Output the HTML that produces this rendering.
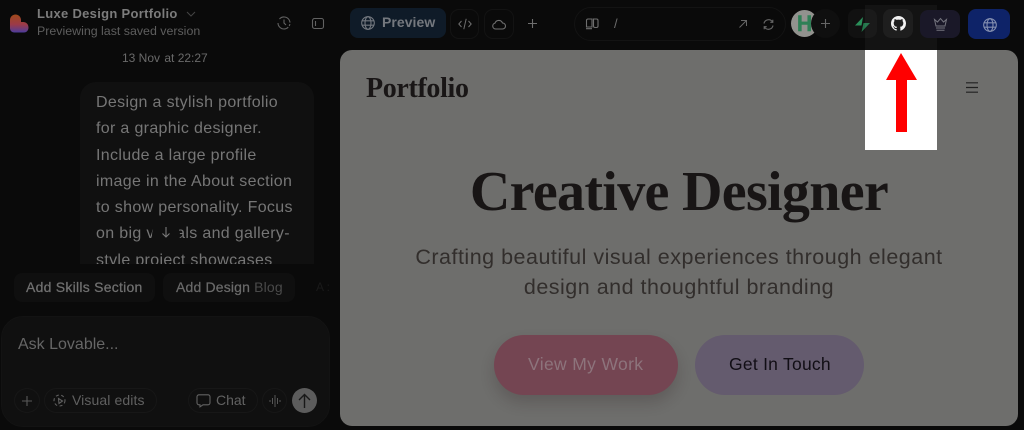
<!DOCTYPE html>
<html><head><meta charset="utf-8">
<style>
html,body{margin:0;padding:0;width:1024px;height:430px;overflow:hidden;background:#0a0a0a}
body{position:relative;font-family:"Liberation Sans",sans-serif}
.t{position:absolute;white-space:nowrap;line-height:1}
.b{position:absolute;box-sizing:border-box}
svg{position:absolute;overflow:visible}
</style></head><body>

<!-- left header -->
<svg style="left:9px;top:14px" width="20" height="20" viewBox="0 0 20 20"><defs><linearGradient id="h" x1="0" y1="0" x2="0" y2="1"><stop offset="0" stop-color="#a04a1a"/><stop offset=".55" stop-color="#9c3a48"/><stop offset="1" stop-color="#4c3c9c"/></linearGradient></defs><path d="M6.500.5C3.300.5 1 3 1 6v8c0 2.700 1.800 4.500 4.300 4.500H15c2.800 0 4.500-2.300 4.500-5 0-3.300-2.400-5.500-5.300-5.500H12V6c0-3-2.300-5.500-5.500-5.500z" fill="url(#h)"/></svg>
<div class="t" style="left:37px;top:7px;font-size:13px;font-weight:700;color:#7c7c7c;letter-spacing:.3px">Luxe Design Portfolio</div>
<svg style="left:186px;top:11px" width="10" height="6" fill="none" stroke="#444" stroke-width="1"><path d="M1 1l4 4 4-4"/></svg>
<div class="t" style="left:37px;top:25px;font-size:12.4px;color:#5e5e5e">Previewing last saved version</div>
<svg style="left:277px;top:16px" width="14" height="14" fill="none" stroke="#626262" stroke-width="1.100"><path d="M2.500 3A6 6 0 1 1 1 7" stroke-dasharray="14 1.500 2 1.500"/><path d="M7 3.500V7l2 2"/></svg>
<svg style="left:312px;top:18px" width="12" height="12" fill="none" stroke="#626262" stroke-width="1.100"><rect x=".5" y=".5" width="11" height="10" rx="2"/><path d="M3.500 3v5"/></svg>
<div class="t" style="left:122px;top:52px;font-size:12px;color:#6a6a6a">13 Nov <span style="margin-left:1px">at 22:27</span></div>

<!-- message bubble -->
<div class="b" style="left:80px;top:82px;width:234px;height:182px;background:#101010;border-radius:16px 16px 0 0"></div>
<div class="b" style="left:96px;top:90px;width:210px;height:174px;overflow:hidden;font-size:16px;line-height:26.300px;letter-spacing:.33px;color:#767676;white-space:nowrap">Design a stylish portfolio<br>for a graphic designer.<br>Include a large profile<br>image in the About section<br>to show personality. Focus<br>on big visuals and gallery-<br>style project showcases</div>
<div class="b" style="left:152px;top:221px;width:28px;height:28px;border-radius:50%;background:#101010"></div>
<svg style="left:160px;top:226px" width="12" height="14" fill="none" stroke="#7a7a7a" stroke-width="1.100"><path d="M6 1v10M2.500 7.500L6 11l3.500-3.500"/></svg>

<!-- chips -->
<div class="b" style="left:14px;top:273px;width:141px;height:29px;background:#0f0f0f;border-radius:8px"></div>
<div class="t" style="left:26px;top:280px;font-size:14px;color:#707070;letter-spacing:.25px;-webkit-text-stroke:.25px #707070">Add Skills Section</div>
<div class="b" style="left:163px;top:273px;width:132px;height:29px;background:#0f0f0f;border-radius:8px"></div>
<div class="t" style="left:176px;top:280px;font-size:14px;color:#6a6a6a;letter-spacing:.17px;-webkit-text-stroke:.25px #6a6a6a">Add Design <span style="color:#4a4a4a;-webkit-text-stroke:0">Blog</span></div>
<div class="t" style="left:316px;top:281px;font-size:12px;color:#1a1a1a">A :</div>

<!-- input -->
<div class="b" style="left:1px;top:316px;width:329px;height:111px;background:#101010;border:1px solid #131313;border-radius:22px"></div>
<div class="t" style="left:18px;top:337px;font-size:16px;color:#666">Ask Lovable...</div>
<div class="b" style="left:14px;top:388px;width:26px;height:25px;border:1px solid #171717;border-radius:50%"></div>
<svg style="left:22px;top:396px" width="10" height="10" stroke="#585858" stroke-width="1.100"><path d="M5 0v10M0 5h10"/></svg>
<div class="b" style="left:44px;top:388px;width:113px;height:25px;border:1px solid #171717;border-radius:13px"></div>
<svg style="left:53px;top:394px" width="13" height="13" fill="none" stroke="#606060" stroke-width="1.100"><circle cx="6.500" cy="6.500" r="5.500" stroke-dasharray="3 2.500"/><path d="M5.500 4.500l4 2.500-3.500 2.500z"/></svg>
<div class="t" style="left:72px;top:393px;font-size:14px;color:#606060;letter-spacing:.1px">Visual edits</div>
<div class="b" style="left:188px;top:388px;width:70px;height:25px;border:1px solid #171717;border-radius:13px"></div>
<svg style="left:196px;top:394px" width="15" height="14" fill="none" stroke="#626262" stroke-width="1.100"><path d="M3 .8h9a2 2 0 0 1 2 2v6a2 2 0 0 1-2 2H7l-3 2v-2H3a2 2 0 0 1-2-2v-6a2 2 0 0 1 2-2z"/></svg>
<div class="t" style="left:216px;top:393px;font-size:14px;color:#626262">Chat</div>
<div class="b" style="left:262px;top:388px;width:25px;height:25px;border:1px solid #171717;border-radius:50%"></div>
<svg style="left:269px;top:395px" width="12" height="12" stroke="#565656" stroke-width="1"><path d="M1 5v2M3.500 3v6M6 0v12M8.500 3v6M11 5v2"/></svg>
<div class="b" style="left:292px;top:388px;width:25px;height:25px;background:#5c5c5c;border-radius:50%"></div>
<svg style="left:297px;top:393px" width="15" height="16" fill="none" stroke="#181818" stroke-width="1.400"><path d="M7.500 15V1.500M2 7l5.500-5.500L13 7"/></svg>

<!-- top nav -->
<div class="b" style="left:350px;top:8px;width:96px;height:30px;background:#0f1b28;border-radius:8px"></div>
<svg style="left:361px;top:16px" width="14" height="14" fill="none" stroke="#72777e" stroke-width="1.100"><circle cx="7" cy="7" r="6.300"/><ellipse cx="7" cy="7" rx="3" ry="6.300"/><path d="M1.200 4.800h11.600M1.200 9.200h11.600"/></svg>
<div class="t" style="left:382px;top:15px;font-size:14px;font-weight:700;color:#74787e;letter-spacing:.05px">Preview</div>
<div class="b" style="left:450px;top:9px;width:29px;height:30px;border:1px solid #131313;border-radius:9px"></div>
<svg style="left:458px;top:18px" width="14" height="12" fill="none" stroke="#707070" stroke-width="1"><path d="M3.500 3L.8 6l2.700 3M10.500 3l2.700 3-2.700 3M8.200 .8L5.800 11.200"/></svg>
<div class="b" style="left:484px;top:9px;width:30px;height:30px;border:1px solid #131313;border-radius:9px"></div>
<svg style="left:492px;top:18px" width="14" height="12" fill="none" stroke="#707070" stroke-width="1.100"><path d="M3.500 11a3 3 0 0 1-.5-5.900A4 4 0 0 1 10.500 5a3 3 0 0 1 0 6z"/></svg>
<svg style="left:528px;top:19px" width="9" height="9" stroke="#6e6e6e" stroke-width="1.100"><path d="M4.500 0v9M0 4.500h9"/></svg>

<div class="b" style="left:574px;top:7px;width:212px;height:34px;border:1px solid #131313;border-radius:17px"></div>
<svg style="left:586px;top:18px" width="13" height="12" fill="none" stroke="#6e6e6e" stroke-width="1.100"><path d="M.5 2.500a1.500 1.500 0 0 1 1.500-1.500h4v8H.5zM7.500 4.500V1h3a1.500 1.500 0 0 1 1.500 1.500V8a1.500 1.500 0 0 1-1.500 1.500h-1.500a1.500 1.500 0 0 1-1.500-1.500zM0 10.700h6"/></svg>
<div class="t" style="left:614px;top:17px;font-size:13px;color:#6c6c6c">/</div>
<svg style="left:739px;top:20px" width="8" height="8" fill="none" stroke="#666" stroke-width="1"><path d="M.5 7.500l7-7M2 .5h5.500V6"/></svg>
<svg style="left:763px;top:19px" width="11" height="11" fill="none" stroke="#666" stroke-width="1.100"><path d="M1 4.500A4.600 4.600 0 0 1 9.500 3M10 6.500A4.600 4.600 0 0 1 1.500 8M9.800 .8v2.500H7.300M1.200 10.200V7.700h2.500"/></svg>

<div class="b" style="left:791px;top:10px;width:27px;height:27px;background:#92928e;border-radius:50%"></div>
<div class="t" style="left:797px;top:12.500px;font-size:22px;font-weight:700;color:#2f8056;transform:scaleX(.95);transform-origin:left;-webkit-text-stroke:.5px #2f8056">H</div>
<div class="b" style="left:811px;top:9px;width:29px;height:29px;background:#0f0f0f;border-radius:50%"></div>
<svg style="left:821px;top:19px" width="9" height="9" stroke="#666" stroke-width="1.100"><path d="M4.500 0v9M0 4.500h9"/></svg>

<div class="b" style="left:848px;top:9px;width:29px;height:29px;background:#111;border-radius:8px"></div>
<svg style="left:855px;top:17px" width="15" height="15"><path d="M8 0L0 8.500h6.500z" fill="#2a905a"/><path d="M6.500 15L15 6H8.500z" fill="#22754a"/></svg>

<!-- highlight strip -->
<div class="b" style="left:865px;top:5px;width:72px;height:45px;background:rgba(255,255,255,.04)"></div>
<div class="b" style="left:883px;top:9px;width:30px;height:29px;background:#1e1e1e;border-radius:8px"></div>
<svg style="left:890.500px;top:16px" width="15" height="15" viewBox="0 0 16 16"><path fill="#f2f2f2" d="M8 0C3.580 0 0 3.580 0 8c0 3.540 2.290 6.530 5.470 7.590.4.070.55-.17.55-.38 0-.19-.01-.82-.01-1.490-2.010.37-2.530-.49-2.690-.94-.09-.23-.48-.94-.82-1.130-.28-.15-.68-.52-.01-.53.63-.01 1.080.58 1.230.82.72 1.210 1.870.87 2.330.66.07-.52.28-.87.51-1.070-1.780-.2-3.640-.89-3.640-3.950 0-.87.31-1.590.82-2.150-.08-.2-.36-1.020.08-2.120 0 0 .67-.21 2.200.82.64-.18 1.320-.27 2-.27.68 0 1.360.09 2 .27 1.530-1.040 2.200-.82 2.200-.82.44 1.100.16 1.920.08 2.120.51.56.82 1.270.82 2.150 0 3.070-1.870 3.750-3.650 3.950.29.25.54.73.54 1.480 0 1.070-.01 1.930-.01 2.200 0 .21.15.46.55.38A8.013 8.013 0 0016 8c0-4.420-3.580-8-8-8z"/></svg>

<div class="b" style="left:920px;top:10px;width:40px;height:28px;background:#1a1828;border-radius:8px"></div>
<svg style="left:934px;top:18px" width="13" height="13" fill="none" stroke="#74747e" stroke-width="1"><path d="M.5 1.500l1.500 6.500h9l1.500-6.500-3 2.500L6.500.5 3.500 4zM2 10h9M2.500 12.200h8"/></svg>
<div class="b" style="left:968px;top:9px;width:42px;height:30px;background:#0e2368;border-radius:8px"></div>
<svg style="left:983px;top:18px" width="14" height="14" fill="none" stroke="#848fb0" stroke-width="1.100"><circle cx="7" cy="7" r="6.300"/><ellipse cx="7" cy="7" rx="3" ry="6.300"/><path d="M1.200 4.800h11.600M1.200 9.200h11.600"/></svg>

<!-- preview -->
<div class="b" style="left:340px;top:50px;width:678px;height:376px;background:#6e6e6c;border-radius:12px;overflow:hidden">
  <div class="t" style="left:26px;top:25px;font-family:'Liberation Serif',serif;font-weight:700;font-size:28px;color:#191616;letter-spacing:-.35px">Portfolio</div>
  <svg style="left:626px;top:32px" width="12" height="11" stroke="#202020" stroke-width="1.200"><path d="M0 .8h12M0 5.500h12M0 10.200h12"/></svg>
  <div class="t" style="left:0;width:678px;text-align:center;top:114px;font-family:'Liberation Serif',serif;font-weight:700;font-size:56px;color:#181515;letter-spacing:-.68px">Creative Designer</div>
  <div class="t" style="left:0;width:678px;text-align:center;top:197px;font-size:21.500px;color:#322e2c;letter-spacing:.5px">Crafting beautiful visual experiences through elegant</div>
  <div class="t" style="left:0;width:678px;text-align:center;top:227px;font-size:21.500px;color:#322e2c;letter-spacing:.5px">design and thoughtful branding</div>
  <div class="b" style="left:154px;top:285px;width:184px;height:60px;background:#744552;border-radius:30px;box-shadow:0 8px 14px rgba(45,32,32,.22)"></div>
  <div class="t" style="left:188px;top:306px;font-size:17.500px;color:#8d747c;letter-spacing:.35px">View My Work</div>
  <div class="b" style="left:355px;top:285px;width:169px;height:60px;background:#645b6e;border-radius:30px"></div>
  <div class="t" style="left:389px;top:306px;font-size:17.500px;color:#110e15;letter-spacing:.25px">Get In Touch</div>
</div>

<!-- white callout with red arrow -->
<div class="b" style="left:865px;top:50px;width:72px;height:100px;background:#fff"></div>
<svg style="left:865px;top:50px" width="72" height="100"><path d="M36 3L52 30H42V82H31V30H21z" fill="#f00"/></svg>

</body></html>
